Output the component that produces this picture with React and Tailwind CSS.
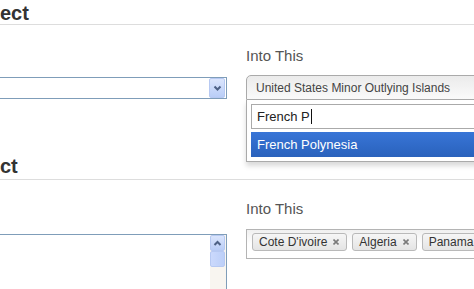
import React from 'react';

const Heading = ({ children, className }) => (
  <div className={`border-b border-[#dddddd] pt-[2px] ${className}`}>
    <h2 className="text-[20px] font-bold leading-[22px] text-[#333]">{children}</h2>
  </div>
);

const Label = ({ children }) => (
  <label className="block text-[15px] leading-[18px] text-[#555]">{children}</label>
);

const XpButton = ({ up }) => (
  <div className="flex h-[16px] w-[15px] items-center justify-center rounded-[2px] border border-[#b7c9f2] bg-gradient-to-b from-[#dbe5fc] to-[#b9cdf7]">
    <svg width="9" height="6" viewBox="0 0 9 6">
      <polyline
        points={up ? '1.5,5 4.5,2 7.5,5' : '1.5,1.5 4.5,4.5 7.5,1.5'}
        fill="none"
        stroke="#4d6185"
        strokeWidth="2"
      />
    </svg>
  </div>
);

const Remove = () => (
  <svg width="6" height="6" viewBox="0 0 6 6" className="shrink-0">
    <path d="M0.5 0.5 L5.5 5.5 M5.5 0.5 L0.5 5.5" stroke="#7a7a7a" strokeWidth="1.6" />
  </svg>
);

const Tag = ({ name }) => (
  <li className="mr-[5px] flex h-[18px] shrink-0 items-center gap-[6px] rounded-[3px] border border-[#b9b9b9] bg-gradient-to-b from-[#f6f6f6] to-[#e4e4e4] pl-[6px] pr-[7px] text-[12px] leading-none text-[#333]">
    <span>{name}</span>
    <Remove />
  </li>
);

export default function App() {
  return (
    <div className="relative h-[289px] w-[474px] overflow-hidden bg-white font-['Liberation_Sans',Arial,sans-serif]">
      {/* single select */}
      <section>
        <Heading className="pb-0">ect</Heading>
        <div className="mt-[22px] flex gap-[19px]">
          <div className="w-[227px] shrink-0 pt-[30px]">
            <div className="flex h-[22px] items-center justify-end border border-l-0 border-[#7f9db9] bg-white pr-px">
              <div className="flex h-[20px] w-[16px] items-center justify-center rounded-[2px] border border-[#b7c9f2] bg-gradient-to-b from-[#dbe5fc] to-[#b9cdf7]">
                <svg width="9" height="6" viewBox="0 0 9 6">
                  <polyline points="1.5,1.5 4.5,4.5 7.5,1.5" fill="none" stroke="#4d6185" strokeWidth="2" />
                </svg>
              </div>
            </div>
          </div>
          <div className="w-[320px] shrink-0">
            <Label>Into This</Label>
            <div className="relative mt-[10px]">
              <div className="h-[25px] rounded-t-[5px] border border-[#aaa] bg-gradient-to-b from-[#ebebeb] to-[#fafafa] pl-[9px] pt-px text-[12px] leading-[22px] text-[#444]">
                United States Minor Outlying Islands
              </div>
              <div className="absolute left-0 top-full z-10 w-full border border-t-0 border-[#aaa] bg-white shadow-[0_4px_5px_rgba(0,0,0,0.15)]">
                <div className="px-[4px] pt-[4px] pb-[3px]">
                  <div className="flex h-[25px] items-center border border-[#aaa] bg-white pl-[5px] text-[13px] text-[#222]">
                    <span>French P</span>
                    <span className="ml-px h-[15px] w-px bg-[#111]" />
                  </div>
                </div>
                <ul className="mb-[4px] mr-[4px] pl-[4px]">
                  <li className="bg-gradient-to-b from-[#3875d7] to-[#2a62bc] px-[6px] py-[5px] text-[13px] leading-[15px] text-white">
                    French Polynesia
                  </li>
                </ul>
              </div>
            </div>
          </div>
        </div>
      </section>

      {/* multiple select */}
      <section className="mt-[53px]">
        <Heading className="pb-[2px]">ct</Heading>
        <div className="mt-[20px] flex gap-[19px]">
          <div className="w-[227px] shrink-0 pt-[34px]">
            <div className="flex h-[80px] justify-end border border-l-0 border-[#7f9db9] bg-white">
              <div className="flex w-[16px] flex-col bg-[#f8f5f0]">
                <XpButton up />
                <div className="h-[16px] w-[15px] rounded-[2px] border border-[#b7c9f2] bg-gradient-to-r from-[#cbd9fc] to-[#bccff8]" />
              </div>
            </div>
          </div>
          <div className="w-[320px] shrink-0">
            <Label>Into This</Label>
            <ul className="mt-[11px] flex h-[30px] items-start overflow-hidden border border-[#b4b4b4] bg-gradient-to-b from-[#f0f0f0] via-white to-white pl-[5px] pt-[3px]">
              <Tag name="Cote D'ivoire" />
              <Tag name="Algeria" />
              <Tag name="Panama" />
            </ul>
          </div>
        </div>
      </section>
    </div>
  );
}
